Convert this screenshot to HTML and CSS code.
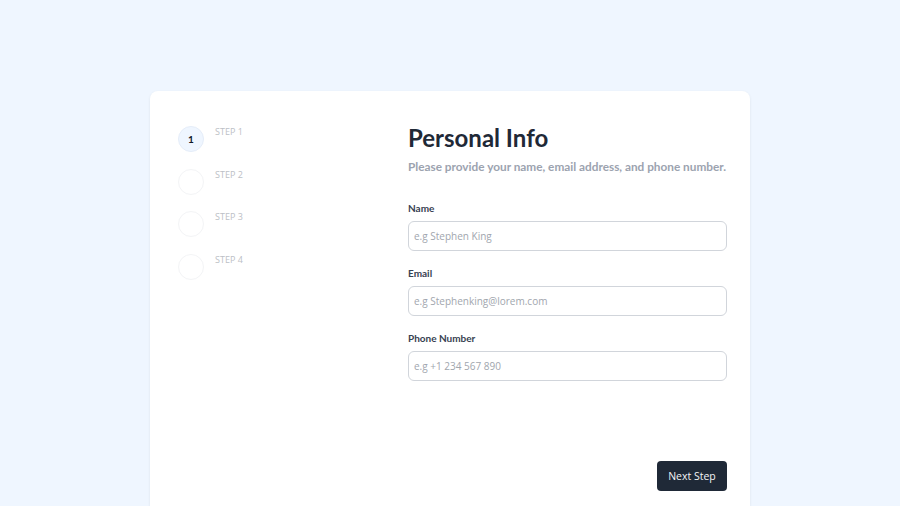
FILE: index.html
```html
<!DOCTYPE html>
<html lang="en">
<head>
<meta charset="utf-8">
<title>Personal Info</title>
<link rel="stylesheet" href="styles.css">
</head>
<body>
<main class="card">
  <aside class="steps">
    <div class="step active"><span class="circle">1</span><span class="step-label">STEP 1</span></div>
    <div class="step"><span class="circle"></span><span class="step-label">STEP 2</span></div>
    <div class="step"><span class="circle"></span><span class="step-label">STEP 3</span></div>
    <div class="step"><span class="circle"></span><span class="step-label">STEP 4</span></div>
  </aside>
  <section class="form">
    <h1 class="title">Personal Info</h1>
    <p class="subtitle">Please provide your name, email address, and phone number.</p>
    <label class="field-label first" for="name">Name</label>
    <input class="field" id="name" type="text" placeholder="e.g Stephen King">
    <label class="field-label" for="email">Email</label>
    <input class="field" id="email" type="email" placeholder="e.g Stephenking@lorem.com">
    <label class="field-label" for="phone">Phone Number</label>
    <input class="field" id="phone" type="tel" placeholder="e.g +1 234 567 890">
    <div class="actions"><button class="next" type="button">Next Step</button></div>
  </section>
</main>
</body>
</html>
```

FILE: styles.css
```css
html, body {
  margin: 0;
  padding: 0;
  background: #eff6ff;
  font-family: "Lato", "Open Sans", sans-serif;
}
body {
  padding-top: 91px;
  overflow: hidden;
  height: 506px;
  box-sizing: border-box;
}
.card {
  width: 600px;
  height: 415px;
  margin: 0 auto;
  box-sizing: border-box;
  background: #ffffff;
  border-radius: 8px 8px 0 0;
  box-shadow: 0 1px 3px rgba(0, 0, 0, 0.08);
  display: flex;
  padding: 32px 22px 0 28px;
}
.steps {
  width: 230px;
  padding-top: 3px;
  display: flex;
  flex-direction: column;
  gap: 16.5px;
}
.step {
  display: flex;
  align-items: flex-start;
  gap: 11px;
}
.circle {
  width: 26px;
  height: 26px;
  box-sizing: border-box;
  border-radius: 50%;
  border: 1px solid #f3f4f6;
  display: flex;
  align-items: center;
  justify-content: center;
  font-size: 10px;
  font-weight: 700;
  color: #111827;
}
.step.active .circle {
  background: #eff6ff;
  border-color: #e5edf9;
}
.step-label {
  font-family: "Open Sans", sans-serif;
  font-size: 9px;
  color: #bcc0c6;
  line-height: 12px;
}
.form {
  width: 319px;
  display: flex;
  flex-direction: column;
}
.title {
  margin: 0;
  font-size: 24px;
  line-height: 30px;
  font-weight: 700;
  color: #1f2937;
}
.subtitle {
  margin: 5px 0 0;
  font-size: 11.8px;
  line-height: 18px;
  font-weight: 700;
  color: #9ca3af;
  white-space: nowrap;
}
.field-label {
  margin-top: 15px;
  font-size: 10px;
  line-height: 14px;
  font-weight: 700;
  color: #374151;
}
.field-label.first {
  margin-top: 25px;
}
.field {
  margin-top: 6px;
  height: 30px;
  box-sizing: border-box;
  border: 1px solid #d1d5db;
  border-radius: 6px;
  padding: 0 5px;
  font-family: "Open Sans", sans-serif;
  font-size: 10px;
  color: #374151;
  outline: none;
}
.field::placeholder {
  color: #a1a6ae;
}
.actions {
  margin-top: 80px;
  display: flex;
  justify-content: flex-end;
}
.next {
  width: 70px;
  height: 30px;
  border: none;
  border-radius: 4px;
  background: #1f2937;
  color: #f3f4f6;
  font-family: "Open Sans", sans-serif;
  font-size: 10.5px;
  cursor: pointer;
}
```
